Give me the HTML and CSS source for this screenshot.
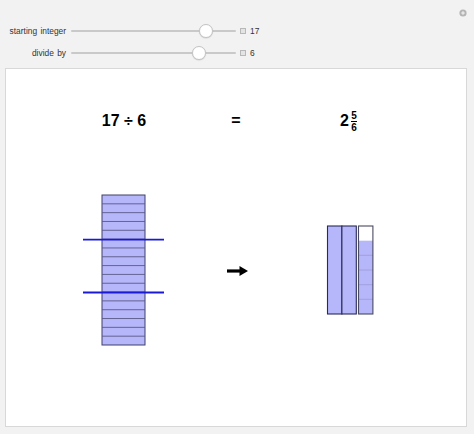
FILE: index.html
```html
<!DOCTYPE html>
<html>
<head>
<meta charset="utf-8">
<link rel="stylesheet" href="styles.css">
</head>
<body>
<div class="app">
  <div class="controls">
    <span class="close" aria-label="close">
      <svg width="8" height="8" viewBox="0 0 8 8"><circle cx="4" cy="4" r="3.6" fill="#b4b4b4"/><path d="M4 2.2v3.6M2.2 4h3.6" stroke="#f4f4f4" stroke-width="1.1"/></svg>
    </span>
    <div class="row">
      <span class="lbl">starting integer</span>
      <div class="slider"><div class="track"></div><div class="thumb" style="left:134px"></div></div>
      <span class="plus"></span>
      <span class="val">17</span>
    </div>
    <div class="row">
      <span class="lbl">divide by</span>
      <div class="slider"><div class="track"></div><div class="thumb" style="left:127px"></div></div>
      <span class="plus"></span>
      <span class="val">6</span>
    </div>
  </div>
  <div class="panel">
    <div class="eq">
      <span class="cell">17 ÷ 6</span>
      <span class="cell">=</span>
      <span class="cell mixed">2<span class="frac"><span class="num">5</span><span class="bar"></span><span class="den">6</span></span></span>
    </div>
    <svg class="fig" width="460" height="284" viewBox="0 0 460 284">
      <g>
        <rect x="96" y="54" width="43" height="150" fill="#b6b6fb" stroke="#40406a" stroke-width="1"/>
        <g stroke="#5a5a86" stroke-width="0.9">
          <line x1="96" x2="139" y1="62.82" y2="62.82"/>
          <line x1="96" x2="139" y1="71.65" y2="71.65"/>
          <line x1="96" x2="139" y1="80.47" y2="80.47"/>
          <line x1="96" x2="139" y1="89.29" y2="89.29"/>
          <line x1="96" x2="139" y1="98.12" y2="98.12"/>
          <line x1="96" x2="139" y1="106.94" y2="106.94"/>
          <line x1="96" x2="139" y1="115.76" y2="115.76"/>
          <line x1="96" x2="139" y1="124.59" y2="124.59"/>
          <line x1="96" x2="139" y1="133.41" y2="133.41"/>
          <line x1="96" x2="139" y1="142.24" y2="142.24"/>
          <line x1="96" x2="139" y1="151.06" y2="151.06"/>
          <line x1="96" x2="139" y1="159.88" y2="159.88"/>
          <line x1="96" x2="139" y1="168.71" y2="168.71"/>
          <line x1="96" x2="139" y1="177.53" y2="177.53"/>
          <line x1="96" x2="139" y1="186.35" y2="186.35"/>
          <line x1="96" x2="139" y1="195.18" y2="195.18"/>
        </g>
        <line x1="77" x2="158" y1="98.6" y2="98.6" stroke="#1a1ad6" stroke-width="1.8"/>
        <line x1="77" x2="158" y1="151.5" y2="151.5" stroke="#1a1ad6" stroke-width="1.8"/>
      </g>
      <g>
        <path d="M221 128.4h14v3.2h-14z" fill="#000"/>
        <path d="M233.5 125 L242 130 L233.5 135 Z" fill="#000"/>
      </g>
      <g>
        <rect x="321.5" y="85" width="14.4" height="88" fill="#b6b6fb" stroke="#2a2a5a" stroke-width="1.1"/>
        <rect x="335.9" y="85" width="14.4" height="88" fill="#b6b6fb" stroke="#2a2a5a" stroke-width="1.1"/>
        <rect x="352.5" y="99.7" width="14.4" height="73.3" fill="#b6b6fb"/>
        <g stroke="#9c9cd8" stroke-width="0.8">
          <line x1="352.5" x2="366.9" y1="114.3" y2="114.3"/>
          <line x1="352.5" x2="366.9" y1="129" y2="129"/>
          <line x1="352.5" x2="366.9" y1="143.7" y2="143.7"/>
          <line x1="352.5" x2="366.9" y1="158.3" y2="158.3"/>
        </g>
        <rect x="352.5" y="85" width="14.4" height="88" fill="none" stroke="#4a4a60" stroke-width="1.1"/>
      </g>
    </svg>
  </div>
</div>
</body>
</html>
```

FILE: styles.css
```css
html, body {
  margin: 0;
  padding: 0;
  background: #f2f2f2;
}
.app {
  width: 474px;
  height: 434px;
  background: #f2f2f2;
  font-family: "Liberation Sans", Arial, sans-serif;
  overflow: hidden;
}
.controls {
  position: relative;
  padding-top: 20px;
  height: 48px;
}
.close {
  position: absolute;
  left: 459px;
  top: 9px;
  width: 8px;
  height: 8px;
  display: block;
}
.close svg { display: block; }
.row {
  display: flex;
  align-items: center;
  height: 22px;
}
.lbl {
  width: 66px;
  text-align: right;
  font-size: 8.4px;
  color: #333;
  word-spacing: 1px;
}
.slider {
  position: relative;
  width: 165px;
  height: 14px;
  margin-left: 5px;
  display: flex;
  align-items: center;
}
.track {
  width: 100%;
  height: 2px;
  background: #c9c9c9;
  border-radius: 1px;
}
.thumb {
  position: absolute;
  top: 0;
  width: 12px;
  height: 12px;
  margin-left: -6px;
  border-radius: 50%;
  background: #fff;
  border: 1px solid #c4c4c4;
  box-shadow: 0 0.5px 1px rgba(0,0,0,0.15);
}
.plus {
  width: 4px;
  height: 4px;
  margin-left: 4px;
  border: 1px solid #b8b8b8;
  background: #e4e4e4;
}
.val {
  margin-left: 4px;
  font-size: 8.4px;
  color: #333;
}
.panel {
  margin-left: 5px;
  width: 460px;
  height: 357px;
  background: #fff;
  border: 1px solid #d8d8d8;
}
.eq {
  display: grid;
  grid-template-columns: 112px 112px 112px;
  justify-content: center;
  padding-top: 32px;
  height: 40px;
}
.cell {
  display: flex;
  align-items: center;
  justify-content: center;
  height: 40px;
  font-size: 16px;
  font-weight: bold;
  color: #000;
}
.mixed { padding-left: 1px; }
.frac {
  display: inline-flex;
  flex-direction: column;
  align-items: center;
  margin-left: 2px;
  font-size: 10px;
}
.num, .den {
  line-height: 11px;
}
.bar {
  width: 6px;
  height: 1px;
  background: #000;
}
.fig {
  display: block;
}
```
